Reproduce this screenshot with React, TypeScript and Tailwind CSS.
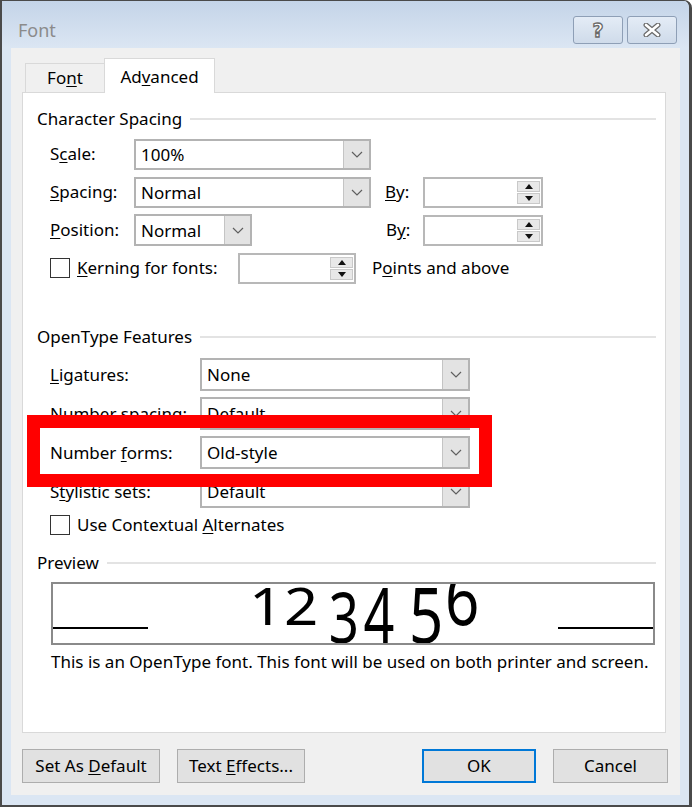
import type { ReactNode } from "react";

function Chevron() {
  return (
    <svg width="12" height="7" viewBox="0 0 12 7">
      <path d="M1 1l5 5 5-5" fill="none" stroke="#5f5f5f" strokeWidth="1.2" />
    </svg>
  );
}

function Combo({ value, className }: { value: string; className: string }) {
  return (
    <div className={`flex border-2 border-[#b3b3b3] bg-white ${className}`}>
      <div className="flex flex-1 items-center pl-[5px] leading-none">{value}</div>
      <div className="flex w-[26px] items-center justify-center border-l border-[#c4c4c4] bg-[#e3e3e3]">
        <Chevron />
      </div>
    </div>
  );
}

function Spin({ className }: { className: string }) {
  return (
    <div className={`flex border-2 border-[#b8b8b8] bg-white ${className}`}>
      <div className="flex-1" />
      <div className="flex w-[24px] flex-col gap-[1px] py-[2px] pr-[1px]">
        <div className="flex flex-1 items-center justify-center border border-[#c9c9c9] bg-[#e8e8e8]">
          <svg width="8" height="5" viewBox="0 0 8 5">
            <path d="M0 5L4 0L8 5Z" fill="#111" />
          </svg>
        </div>
        <div className="flex flex-1 items-center justify-center border border-[#c9c9c9] bg-[#e8e8e8]">
          <svg width="8" height="5" viewBox="0 0 8 5">
            <path d="M0 0L4 5L8 0Z" fill="#111" />
          </svg>
        </div>
      </div>
    </div>
  );
}

function Check() {
  return <div className="h-[20px] w-[20px] shrink-0 border-[1.5px] border-[#333] bg-white" />;
}

function Heading({ children }: { children: ReactNode }) {
  return (
    <div className="flex h-[24px] items-center gap-[8px]">
      <span className="whitespace-nowrap">{children}</span>
      <div className="h-[2px] flex-1 bg-[#e3e3e3]" />
    </div>
  );
}

function Btn({ children, className }: { children: ReactNode; className: string }) {
  return (
    <div className={`flex h-[34px] items-center justify-center bg-[#e1e1e1] ${className}`}>
      {children}
    </div>
  );
}

export default function App() {
  return (
    <div className="relative h-[807px] w-[692px] overflow-hidden rounded-tr-[8px] border-t border-r-[3px] border-b-2 border-l-2 border-[#4a4a4a] bg-[#dbe6f3] font-['Noto_Sans',sans-serif] text-[17px] text-black">
      {/* Title bar */}
      <div className="flex h-[47px] items-start bg-linear-to-b from-[#c4d4e8] to-[#dbe6f3] pt-[15px] pl-[16px] pr-[12px]">
        <span className="h-[28px] text-[18px] leading-[28px] text-[#8b8b8b]">Font</span>
        <div className="ml-auto flex gap-[4px]">
          <div className="flex h-[28px] w-[50px] items-center justify-center rounded-[3px] border border-[#8e9fb6] bg-linear-to-b from-[#e4ecf6] to-[#cfdbea]">
            <span className="font-['DejaVu_Sans',sans-serif] text-[19px] leading-none font-bold text-white [-webkit-text-stroke:1.3px_#6a6a6a]">
              ?
            </span>
          </div>
          <div className="flex h-[28px] w-[50px] items-center justify-center rounded-[3px] border border-[#8e9fb6] bg-linear-to-b from-[#e4ecf6] to-[#cfdbea]">
            <svg width="18" height="14" viewBox="0 0 18 14">
              <path d="M3 2L15 12M15 2L3 12" stroke="#6a6a6a" strokeWidth="5" strokeLinecap="round" />
              <path d="M3 2L15 12M15 2L3 12" stroke="#fff" strokeWidth="2.6" strokeLinecap="round" />
            </svg>
          </div>
        </div>
      </div>

      {/* Client area */}
      <div className="mx-[9px] h-[747px] bg-[#f0f0f0] px-[11px] pt-[10px]">
        {/* Tabs */}
        <div className="flex h-[34px] items-end">
          <div className="ml-[3px] flex h-[29px] w-[79px] items-center justify-center border-t border-l border-[#d9d9d9]">
            Fo<span className="underline underline-offset-2">n</span>t
          </div>
          <div className="relative z-10 -mb-[1px] flex h-[35px] w-[111px] items-center justify-center border-t border-r border-l border-[#d9d9d9] bg-white pt-[2px]">
            Ad<span className="underline underline-offset-2">v</span>anced
          </div>
        </div>

        {/* Panel */}
        <div className="mr-[3px] h-[641px] border border-[#d9d9d9] bg-white pt-[14px] pr-[9px] pl-[14px]">
          <Heading>Character Spacing</Heading>
          <div className="mt-[4px] pl-[13px]">
            <div className="flex h-[38px] items-center">
              <span className="w-[84px]">
                S<span className="underline underline-offset-2">c</span>ale:
              </span>
              <Combo value="100%" className="h-[31px] w-[237px]" />
            </div>
            <div className="flex h-[38px] items-center">
              <span className="w-[84px]">
                <span className="underline underline-offset-2">S</span>pacing:
              </span>
              <Combo value="Normal" className="h-[31px] w-[237px]" />
              <span className="ml-[14px] w-[38px]">
                <span className="underline underline-offset-2">B</span>y:
              </span>
              <Spin className="h-[31px] w-[120px]" />
            </div>
            <div className="flex h-[38px] items-center">
              <span className="w-[84px]">
                <span className="underline underline-offset-2">P</span>osition:
              </span>
              <div className="w-[237px]">
                <Combo value="Normal" className="h-[32px] w-[118px]" />
              </div>
              <span className="ml-[15px] w-[37px]">
                B<span className="underline underline-offset-2">y</span>:
              </span>
              <Spin className="h-[31px] w-[120px]" />
            </div>
            <div className="flex h-[38px] items-center">
              <Check />
              <span className="ml-[7px] w-[161px]">
                <span className="underline underline-offset-2">K</span>erning for fonts:
              </span>
              <Spin className="h-[31px] w-[118px]" />
              <span className="ml-[16px]">
                P<span className="underline underline-offset-2">o</span>ints and above
              </span>
            </div>
          </div>

          <div className="mt-[38px]">
            <Heading>OpenType Features</Heading>
          </div>
          <div className="mt-[6px] pl-[13px]">
            <div className="flex h-[39px] items-center">
              <span className="w-[150px]">
                <span className="underline underline-offset-2">L</span>igatures:
              </span>
              <Combo value="None" className="h-[33px] w-[270px]" />
            </div>
            <div className="flex h-[39px] items-center">
              <span className="w-[150px]">
                Nu<span className="underline underline-offset-2">m</span>ber spacing:
              </span>
              <Combo value="Default" className="h-[33px] w-[270px]" />
            </div>
            <div className="flex h-[39px] items-center">
              <span className="w-[150px]">
                Number <span className="underline underline-offset-2">f</span>orms:
              </span>
              <Combo value="Old-style" className="h-[33px] w-[270px]" />
            </div>
            <div className="flex h-[39px] items-center">
              <span className="w-[150px]">
                S<span className="underline underline-offset-2">t</span>ylistic sets:
              </span>
              <Combo value="Default" className="h-[33px] w-[270px]" />
            </div>
            <div className="flex h-[28px] items-center">
              <Check />
              <span className="ml-[7px]">
                Use Contextual <span className="underline underline-offset-2">A</span>lternates
              </span>
            </div>
          </div>

          <div className="mt-[12px]">
            <Heading>Preview</Heading>
          </div>
          <div className="mt-[7px] ml-[14px] flex h-[63px] w-[604px] items-start overflow-hidden border-2 border-[#8a8a8a]">
            <div className="mt-[43px] h-[2px] w-[95px] shrink-0 bg-black" />
            <div className="-mt-[12px] ml-[101px] flex items-start text-[60px] leading-none">
              <span className="w-[30px] origin-[50%_53px] scale-y-[0.865] text-center">1</span>
              <span className="ml-[5px] w-[30px] origin-[50%_53px] scale-y-[0.865] text-center">2</span>
              <span className="ml-[13px] w-[30px] origin-top translate-y-[9px] scale-x-[0.88] scale-y-[1.17] text-center">3</span>
              <span className="ml-[5px] w-[30px] origin-top translate-y-[3px] scale-x-[0.9] scale-y-[1.285] text-center">4</span>
              <span className="ml-[17px] w-[30px] origin-top translate-y-[3px] scale-y-[1.285] text-center">5</span>
              <span className="ml-[6px] w-[30px] origin-[50%_53px] scale-y-[1.285] text-center">6</span>
            </div>
            <div className="mt-[43px] ml-auto h-[2px] w-[95px] shrink-0 bg-black" />
          </div>
          <div className="mt-[5px] ml-[14px] flex h-[24px] items-center whitespace-nowrap">
            This is an OpenType font. This font will be used on both printer and screen.
          </div>
        </div>

        {/* Buttons */}
        <div className="mt-[16px] mr-[1px] flex">
          <Btn className="w-[138px] border border-[#adadad]">
            <span>
              Set As <span className="underline underline-offset-2">D</span>efault
            </span>
          </Btn>
          <Btn className="ml-[17px] w-[128px] border border-[#adadad]">
            <span>
              Text <span className="underline underline-offset-2">E</span>ffects...
            </span>
          </Btn>
          <Btn className="ml-auto w-[114px] border-2 border-[#0078d7]">OK</Btn>
          <Btn className="ml-[17px] w-[115px] border border-[#adadad]">Cancel</Btn>
        </div>
      </div>

      {/* Red highlight overlay */}
      <div className="pointer-events-none absolute top-[414px] left-[25px] h-[72px] w-[465px] border-[13px] border-[#ff0000]" />
    </div>
  );
}
